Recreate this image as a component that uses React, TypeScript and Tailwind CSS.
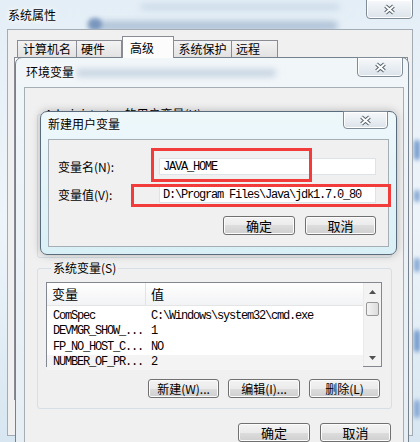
import React from 'react';

const CloseX = () => (
  <svg width="13" height="11" viewBox="0 0 13 11">
    <path d="M2.5 2 L10.5 9 M10.5 2 L2.5 9" stroke="#56626d" strokeWidth="3.8" />
    <path d="M2.5 2 L10.5 9 M10.5 2 L2.5 9" stroke="#ffffff" strokeWidth="1.8" />
  </svg>
);

const CloseBtn = ({ className }: { className: string }) => (
  <div
    className={`absolute flex items-center justify-center rounded-b-[4px] border border-[#7f8b96] bg-linear-to-b from-[#f7f9fb] to-[#dbe3ea] shadow-[inset_0_0_0_1px_#ffffff] ${className}`}
  >
    <CloseX />
  </div>
);

const Btn = ({ children, w }: { children: React.ReactNode; w: string }) => (
  <div
    className={`flex h-[19px] items-center justify-center rounded-[3px] border border-[#707070] bg-[linear-gradient(#f3f3f3,#ebebeb_50%,#dddddd_50%,#cfcfcf)] text-[13px] leading-none shadow-[inset_0_0_0_1px_#fcfcfc] ${w}`}
  >
    {children}
  </div>
);

const rows = [
  ['ComSpec', 'C:\\Windows\\system32\\cmd.exe'],
  ['DEVMGR_SHOW_...', '1'],
  ['FP_NO_HOST_C...', 'NO'],
  ['NUMBER_OF_PR...', '2'],
];

const App = () => {
  return (
    <div className="relative h-[442px] w-[420px] overflow-hidden bg-linear-to-b from-[#e4eef6] via-[#eef5fa] to-[#d7e6f1] font-['Noto_Sans_CJK_SC',sans-serif] text-[12px] text-black">
      {/* blurred glass behind the frames */}
      <div className="absolute left-[88px] top-[21px] h-[10px] w-[250px] rounded-full bg-[#9cb2cc] opacity-70 blur-[3px]" />
      <div className="absolute left-[88px] top-[18px] h-[12px] w-[14px] rounded-full bg-[#5d7fae] opacity-70 blur-[2px]" />
      <div className="absolute left-[140px] top-[4px] h-[6px] w-[200px] rounded-full bg-[#b9cde0] opacity-60 blur-[3px]" />
      <div className="absolute left-[414px] top-[140px] h-[20px] w-[6px] rounded-full bg-[#6f98cc] blur-[2px]" />
      <div className="absolute left-[414px] top-[190px] h-[12px] w-[6px] rounded-full bg-[#7fa4d2] blur-[2px]" />
      <div className="absolute left-[414px] top-[258px] h-[14px] w-[6px] rounded-full bg-[#7fa4d2] blur-[2px]" />
      <div className="absolute left-[414px] top-[330px] h-[22px] w-[6px] rounded-full bg-[#6b95ca] blur-[2px]" />
      <div className="absolute left-[414px] top-[400px] h-[18px] w-[6px] rounded-full bg-[#7fa4d2] blur-[2px]" />

      {/* 系统属性 */}
      <div className="absolute left-[8px] top-[6px] text-[12px] leading-[17px] [text-shadow:0_0_6px_#fff,0_0_6px_#fff]">
        系统属性
      </div>
      <CloseBtn className="left-[366px] top-[-1px] h-[20px] w-[47px]" />
      <div className="absolute left-[7px] top-[29px] h-[407px] w-[406px] border border-[#a3acb5] bg-[#f0f0f0] pl-[6px] pt-[6px]">
        <div className="flex h-[21px] items-end pl-[3px]">
          <div className="flex h-[17px] w-[60px] items-center justify-center border border-b-0 border-[#898c95] bg-linear-to-b from-[#f3f3f3] to-[#e2e2e2]">
            计算机名
          </div>
          <div className="flex h-[17px] w-[45px] items-center justify-start border border-b-0 border-l-0 border-[#898c95] bg-linear-to-b from-[#f3f3f3] to-[#e2e2e2] pl-[4px]">
            硬件
          </div>
          <div className="relative z-10 -mb-px flex h-[22px] w-[52px] items-start justify-start border border-b-0 border-[#898c95] bg-[#fcfcfc] pl-[7px] pt-[2px]">
            高级
          </div>
          <div className="flex h-[17px] w-[58px] items-center justify-center border border-b-0 border-l-0 border-[#898c95] bg-linear-to-b from-[#f3f3f3] to-[#e2e2e2]">
            系统保护
          </div>
          <div className="flex h-[17px] w-[46px] items-center justify-start border border-b-0 border-l-0 border-[#898c95] bg-linear-to-b from-[#f3f3f3] to-[#e2e2e2] pl-[4px]">
            远程
          </div>
        </div>
        <div className="h-[343px] w-[394px] border border-[#898c95] bg-[#fcfcfc]" />
      </div>

      {/* 环境变量 */}
      <div className="absolute left-[15px] top-[57px] flex h-[400px] w-[394px] flex-col rounded-t-[7px] border border-[#75828e] bg-linear-to-b from-[#f1f6f9] to-[#e6eef4]">
        <div className="absolute left-[60px] top-[11px] h-[8px] w-[200px] rounded-full bg-[#9fb4cc] opacity-50 blur-[3px]" />
        <div className="relative h-[29px] pl-[10px] pt-[6px] leading-[16px] [text-shadow:0_0_6px_#fff]">环境变量</div>
        <CloseBtn className="left-[341px] top-[-1px] h-[20px] w-[46px]" />
        <div className="ml-[8px] w-[380px] flex-1 border border-[#a5adb5] bg-[#f0f0f0] pl-[12px] pr-[11px] pt-[18px]">
          <fieldset className="h-[152px] rounded-[3px] border border-[#d5dfe5]">
            <legend className="ml-[5px] px-[2px] leading-[16px]">Administrator 的用户变量(U)</legend>
          </fieldset>
          <fieldset className="mt-[2px] rounded-[3px] border border-[#d5dfe5] pb-[10px] pl-[8px]">
            <legend className="ml-[5px] px-[2px] leading-[16px]">系统变量(S)</legend>
            <div className="mt-[6px] flex h-[85px] w-[336px] border border-[#828790] bg-white">
              <div className="flex-1">
                <div className="flex h-[23px] border-b border-[#e5e5e5] bg-linear-to-b from-white to-[#f2f3f5] text-[13px] leading-[22px]">
                  <div className="w-[99px] border-r border-[#e3e3e3] pl-[5px]">变量</div>
                  <div className="pl-[5px]">值</div>
                </div>
                <div className="pt-[2px] font-['Liberation_Mono',monospace] text-[12px] tracking-[-1.2px]">
                  {rows.map((r, i) => (
                    <div key={r[0]} className={`flex h-[15.5px] items-center ${i === 3 ? 'bg-[#f4f4f4]' : ''}`}>
                      <div className="w-[99px] pl-[6px]">{r[0]}</div>
                      <div className="pl-[5px]">{r[1]}</div>
                    </div>
                  ))}
                </div>
              </div>
              <div className="flex w-[18px] flex-col border-l border-[#ebebeb] bg-[#f3f3f3]">
                <div className="flex h-[17px] items-center justify-center">
                  <svg width="7" height="4" viewBox="0 0 7 4">
                    <path d="M3.5 0 L7 4 L0 4 Z" fill="#505050" />
                  </svg>
                </div>
                <div className="mx-[2px] mt-[2px] h-[14px] rounded-[2px] border border-[#979797] bg-linear-to-r from-[#f4f4f4] to-[#dcdcdc]" />
                <div className="flex-1" />
                <div className="flex h-[17px] items-center justify-center">
                  <svg width="7" height="4" viewBox="0 0 7 4">
                    <path d="M0 0 L7 0 L3.5 4 Z" fill="#505050" />
                  </svg>
                </div>
              </div>
            </div>
            <div className="mt-[12px] flex w-[336px] justify-end gap-[9px] pr-[2px]">
              <Btn w="w-[71px]">
                <span className="text-[12px]">新建(W)...</span>
              </Btn>
              <Btn w="w-[72px]">
                <span className="text-[12px]">编辑(I)...</span>
              </Btn>
              <Btn w="w-[71px]">
                <span className="text-[12px]">删除(L)</span>
              </Btn>
            </div>
          </fieldset>
          <div className="mt-[14px] flex justify-end gap-[10px] pr-[1px]">
            <Btn w="w-[72px]">确定</Btn>
            <Btn w="w-[71px]">取消</Btn>
          </div>
        </div>
      </div>

      {/* 新建用户变量 */}
      <div className="absolute left-[40px] top-[111px] flex h-[144px] w-[357px] flex-col rounded-[7px] border border-[#5a6b7b] bg-linear-to-b from-[#eef8fb] to-[#d9eff6] shadow-[0_0_8px_rgba(0,0,0,0.25)]">
        <div className="h-[27px] pl-[7px] pt-[4px] leading-[16px] [text-shadow:0_0_6px_#fff]">新建用户变量</div>
        <CloseBtn className="left-[302px] top-[-1px] h-[18px] w-[45px]" />
        <div className="mx-[7px] h-[108px] border border-[#a5adb5] bg-[#f0f0f0] pl-[9px] pr-[12px] pt-[18px]">
          <div className="flex h-[17px] items-center">
            <div className="w-[102px]">变量名(N):</div>
            <div className="flex h-[17px] w-[219px] items-center border border-[#dde3e8] bg-white pl-[3px] font-['Liberation_Mono',monospace] text-[12px] tracking-[-1.2px]">
              JAVA_HOME
            </div>
          </div>
          <div className="mt-[11px] flex h-[17px] items-center">
            <div className="w-[102px]">变量值(V):</div>
            <div className="flex h-[17px] w-[219px] items-center border border-[#dde3e8] bg-white pl-[3px] font-['Liberation_Mono',monospace] text-[12px] tracking-[-1.2px]">
              D:\Program Files\Java\jdk1.7.0_80
            </div>
          </div>
          <div className="mt-[13px] flex justify-end gap-[10px]">
            <Btn w="w-[72px]">确定</Btn>
            <Btn w="w-[71px]">取消</Btn>
          </div>
        </div>
      </div>

      {/* red highlight boxes */}
      <div className="absolute left-[151px] top-[148px] h-[34px] w-[161px] border-[3px] border-[#f23b3b]" />
      <div className="absolute left-[131px] top-[184px] h-[23px] w-[260px] border-[3px] border-[#f23b3b]" />
    </div>
  );
};

export default App;
